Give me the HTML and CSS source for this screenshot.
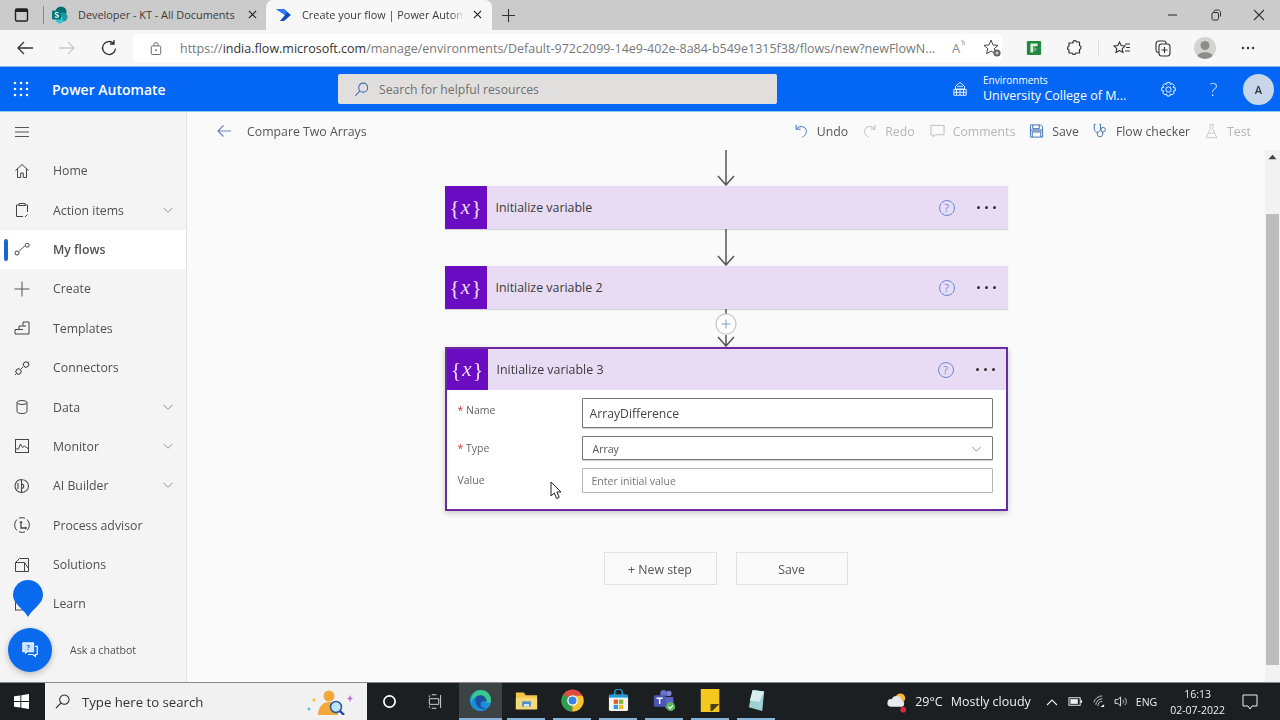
FILE: index.html
```html
<!DOCTYPE html>
<html lang="en">
<head>
<meta charset="utf-8">
<title>Create your flow | Power Automate</title>
<link rel="stylesheet" href="styles.css">
</head>
<body>
<div class="screen">
  <div class="tabstrip">
    <svg class="tb-ico" viewBox="0 0 18 18"><rect x="2.5" y="3" width="12" height="12" rx="1.5" fill="none" stroke="#222" stroke-width="1.4"/><rect x="2.5" y="3" width="12" height="3" fill="#222"/></svg>
    <span class="tab-sep"></span>
    <div class="tab tab-idle">
      <svg class="fav" viewBox="0 0 18 18"><circle cx="10" cy="6" r="5.5" fill="#036c70"/><circle cx="12" cy="11" r="4.5" fill="#1a9ba1"/><circle cx="8.5" cy="14" r="3.5" fill="#37c6d0"/><rect x="1" y="4.5" width="9" height="9" rx="1" fill="#03787c"/><path d="M7.5 7c-1-.8-3.3-.7-3.3.6 0 1.6 3.3 1 3.3 2.6 0 1.300-2.500 1.400-3.500.6" fill="none" stroke="#fff" stroke-width="1.100"/></svg>
      <span class="tab-title">Developer - KT - All Documents</span>
      <svg class="tab-x" viewBox="0 0 10 10"><path d="M1 1l8 8M9 1l-8 8" stroke="#222" stroke-width="1.300"/></svg>
    </div>
    <div class="tab tab-on">
      <svg class="fav" viewBox="0 0 18 18"><path d="M1 3h8l7 6-7 6H5l5-6z" fill="#0f4fb8"/><path d="M1 3h8l3 3.500-7 8.500H5l5-6z" fill="#2f7df0"/></svg>
      <span class="tab-title tab-fade">Create your flow | Power Autom</span>
      <svg class="tab-x" viewBox="0 0 10 10"><path d="M1 1l8 8M9 1l-8 8" stroke="#222" stroke-width="1.300"/></svg>
    </div>
    <svg class="newtab" viewBox="0 0 14 14"><path d="M7 0v14M0 7h14" stroke="#333" stroke-width="1.200"/></svg>
    <div class="winbtns">
      <svg viewBox="0 0 12 12"><path d="M1 6h9" stroke="#333" stroke-width="1.100"/></svg>
      <svg viewBox="0 0 12 12"><rect x="2" y="3.500" width="6.500" height="7.500" rx="1.500" fill="none" stroke="#333"/><path d="M4 3.500V2.500a1.500 1.500 0 0 1 1.500-1.500h2A2.500 2.500 0 0 1 10.500 3.500v4" fill="none" stroke="#333"/></svg>
      <svg viewBox="0 0 12 12"><path d="M1 1l10 10M11 1L1 11" stroke="#333" stroke-width="1.100"/></svg>
    </div>
  </div>

  <div class="addrbar">
    <svg class="nav-ico" viewBox="0 0 18 18"><path d="M17 9H2M8 3L2 9l6 6" fill="none" stroke="#333" stroke-width="1.300"/></svg>
    <svg class="nav-ico faint" viewBox="0 0 18 18"><path d="M1 9h15M10 3l6 6-6 6" fill="none" stroke="#ccc" stroke-width="1.300"/></svg>
    <svg class="nav-ico" viewBox="0 0 18 18"><path d="M15.500 9.500a6.500 6.500 0 1 1-2-5.200M14 1v4h-4" fill="none" stroke="#333" stroke-width="1.300"/></svg>
    <div class="urlbox">
      <svg class="lock" viewBox="0 0 14 16"><rect x="1.500" y="5" width="11" height="10" rx="1.500" fill="none" stroke="#555"/><path d="M4.500 5V3.500a2.500 2.500 0 0 1 5 0V5" fill="none" stroke="#555"/><circle cx="7" cy="10" r="1" fill="#555"/></svg>
      <span class="url"><span class="url-dim">https://</span>india.flow.microsoft.com<span class="url-dim">/manage/environments/Default-972c2099-14e9-402e-8a84-b549e1315f38/flows/new?newFlowN...</span></span>
      <span class="readaloud">A<svg viewBox="0 0 6 10"><path d="M1 1c2 1 3 3 2 6M3 1c2 1 3 3 2 6" fill="none" stroke="#888" stroke-width=".8"/></svg></span>
      <svg class="url-star" viewBox="0 0 20 20"><path d="M9 2l2 5 5 .4-3.800 3.300 1.200 5L9 13l-4.400 2.700 1.200-5L2 7.400 7 7z" fill="none" stroke="#444"/><circle cx="15" cy="15" r="3.600" fill="#666"/><path d="M13.500 15h3M15 13.500v3" stroke="#fff" stroke-width=".9"/></svg>
    </div>
    <div class="ext-row">
      <svg class="ext-ico" viewBox="0 0 18 18"><rect x="1" y="1" width="16" height="16" rx="1.500" fill="#1f8a3d"/><path d="M5 14V4h8v3H8v7z" fill="#fff" opacity=".85"/><path d="M9 8.500l3 2-3 2z" fill="#1f8a3d" stroke="#fff" stroke-width=".5"/></svg>
      <svg class="ext-ico" viewBox="0 0 18 18"><path d="M7 2.500c1-1.500 3-1 3.500.5h3v3.500c2 .5 2 3.500 0 4V14h-3.500c-.5 2-3.500 2-4 0H3v-3c-2-.5-2-3 0-4V4h4z" fill="none" stroke="#333" stroke-width="1.200"/></svg>
      <span class="ext-sep"></span>
      <svg class="ext-ico" viewBox="0 0 18 18"><path d="M6.500 3l1.700 3.600 3.800.4-2.800 2.600.8 3.900-3.500-2-3.500 2 .8-3.900L1 7l3.800-.4zM12 5h5M13 8.500h4M12 12h5" fill="none" stroke="#333" stroke-width="1.100"/></svg>
      <svg class="ext-ico" viewBox="0 0 18 18"><rect x="5" y="5" width="11" height="12" rx="2.500" fill="none" stroke="#333" stroke-width="1.100"/><path d="M5 13.500H4a2.500 2.500 0 0 1-2-2.500V5a3 3 0 0 1 3-3h5a2 2 0 0 1 2 2v1M10.500 8v6M7.500 11h6" fill="none" stroke="#333" stroke-width="1.100"/></svg>
      <svg class="profile" viewBox="0 0 22 22"><circle cx="11" cy="11" r="11" fill="#d3d3d0"/><circle cx="11" cy="8.500" r="4.500" fill="#8c8c88"/><path d="M3.500 19c1-5 14-5 15 0a11 11 0 0 1-15 0z" fill="#8c8c88"/></svg>
      <svg class="ext-ico" viewBox="0 0 18 18"><circle cx="4" cy="9" r="1.200" fill="#333"/><circle cx="9" cy="9" r="1.200" fill="#333"/><circle cx="14" cy="9" r="1.200" fill="#333"/></svg>
    </div>
  </div>

  <header class="appbar">
    <svg class="waffle" viewBox="0 0 16 16" fill="#fff"><circle cx="2" cy="2" r="1.300"/><circle cx="8" cy="2" r="1.300"/><circle cx="14" cy="2" r="1.300"/><circle cx="2" cy="8" r="1.300"/><circle cx="8" cy="8" r="1.300"/><circle cx="14" cy="8" r="1.300"/><circle cx="2" cy="14" r="1.300"/><circle cx="8" cy="14" r="1.300"/><circle cx="14" cy="14" r="1.300"/></svg>
    <span class="brand">Power Automate</span>
    <div class="searchbox">
      <svg viewBox="0 0 16 16"><circle cx="9.800" cy="6" r="4.800" fill="none" stroke="#3d6fb8" stroke-width="1.200"/><path d="M6.300 9.500L1.500 14.500" stroke="#3d6fb8" stroke-width="1.200"/></svg>
      <span>Search for helpful resources</span>
    </div>
    <div class="env">
      <svg viewBox="0 0 18 18"><path d="M9 1.500L14 6v3H4V6zM2 16V9.500h14V16zM5 9.500V16M9 9.500V16M13 9.500V16M2 12.700h14M6 6h6" fill="none" stroke="#fff"/></svg>
      <div class="env-text"><span class="env-small">Environments</span><span class="env-name">University College of M...</span></div>
    </div>
    <svg class="gear" viewBox="0 0 18 18"><circle cx="9" cy="9" r="2.800" fill="none" stroke="#fff"/><path d="M7.500 1.500h3l.5 2.300 2-1.200 2.100 2.100-1.200 2 2.300.5v3l-2.300.5 1.200 2-2.100 2.100-2-1.200-.5 2.300h-3l-.5-2.300-2 1.200-2.100-2.100 1.200-2-2.300-.5v-3l2.300-.5-1.200-2L5 2.600l2 1.200z" fill="none" stroke="#fff" stroke-linejoin="round"/></svg>
    <span class="help">?</span>
    <span class="avatar">A</span>
  </header>

  <div class="workspace">
    <nav class="sidebar">
      <div class="burger"><svg viewBox="0 0 16 12"><path d="M1 1.500h14M1 6h14M1 10.500h14" stroke="#555" stroke-width="1.100"/></svg></div>
      <a class="nav-item"><svg viewBox="0 0 16 16"><path d="M1.500 7.500L8 1.500l6.500 6M3.500 6v8.500h3.200V10h2.600v4.500h3.200V6" fill="none" stroke="#444"/></svg><span>Home</span></a>
      <a class="nav-item"><svg viewBox="0 0 16 16"><path d="M5 3H2.500v11.500H9M11 3h2.500v7M5 3.500V1.500h6v2z" fill="none" stroke="#444"/><path d="M11 15l2.500-2.500" stroke="#444"/></svg><span>Action items</span><svg class="chev" viewBox="0 0 12 8"><path d="M1 1l5 5 5-5" fill="none" stroke="#888"/></svg></a>
      <a class="nav-item active"><svg viewBox="0 0 16 16"><circle cx="3" cy="12" r="2" fill="none" stroke="#444"/><rect x="11.500" y="2.500" width="3.500" height="3.500" rx="1" fill="none" stroke="#444"/><path d="M5 10.500l3.500-3.500M8.500 7l2.500-2.500" stroke="#444"/></svg><span>My flows</span></a>
      <a class="nav-item"><svg viewBox="0 0 16 16"><path d="M8 .5v15M.5 8h15" stroke="#555"/></svg><span>Create</span></a>
      <a class="nav-item"><svg viewBox="0 0 16 16"><path d="M1 14V9.500h4V6h4V2h6v12zM5 9.500h4M9 6h3" fill="none" stroke="#444"/></svg><span>Templates</span></a>
      <a class="nav-item"><svg viewBox="0 0 16 16"><rect x="2" y="9" width="5" height="5" rx="2" fill="none" stroke="#444" transform="rotate(-45 4.500 11.500)"/><rect x="9.500" y="2" width="5" height="5" rx="2" fill="none" stroke="#444" transform="rotate(-45 12 4.500)"/><path d="M7 9l2-2M1 15l1.500-1.500M13.500 3L15 1.500" stroke="#444"/></svg><span>Connectors</span></a>
      <a class="nav-item"><svg viewBox="0 0 16 16"><ellipse cx="8" cy="3.500" rx="5" ry="2" fill="none" stroke="#444"/><path d="M3 3.500v9c0 2.700 10 2.700 10 0v-9" fill="none" stroke="#444"/></svg><span>Data</span><svg class="chev" viewBox="0 0 12 8"><path d="M1 1l5 5 5-5" fill="none" stroke="#888"/></svg></a>
      <a class="nav-item"><svg viewBox="0 0 16 16"><rect x="1.500" y="1.500" width="13" height="13" fill="none" stroke="#444"/><path d="M1.500 11h3l2-5 2 3.500 2-1.500 4 3" fill="none" stroke="#444"/></svg><span>Monitor</span><svg class="chev" viewBox="0 0 12 8"><path d="M1 1l5 5 5-5" fill="none" stroke="#888"/></svg></a>
      <a class="nav-item"><svg viewBox="0 0 16 16"><path d="M7.500 1.500a6.500 6.500 0 1 0 0 13zM7.500 1.500c3 0 7 2 7 6.500s-4 6.500-7 6.500M7.500 6c3 0 3 4.500 0 4.500M4 5v6" fill="none" stroke="#444" stroke-width="1.100"/></svg><span>AI Builder</span><svg class="chev" viewBox="0 0 12 8"><path d="M1 1l5 5 5-5" fill="none" stroke="#888"/></svg></a>
      <a class="nav-item"><svg viewBox="0 0 16 16"><path d="M3 2.500a7.500 7.500 0 0 0 0 11M13 2.500a7.500 7.500 0 0 1 0 11M5 1.200a7.500 7.500 0 0 1 6 0M5 14.800a7.500 7.500 0 0 0 6 0" fill="none" stroke="#444"/><circle cx="7" cy="5.500" r="1.300" fill="#444"/><path d="M7 7v4h3" fill="none" stroke="#444" stroke-width="1.300"/><circle cx="11.500" cy="11" r="1.300" fill="#444"/></svg><span>Process advisor</span></a>
      <a class="nav-item"><svg viewBox="0 0 16 16"><path d="M1.500 14.500V5.500L5.500 1.500h9v13zM1.500 5.500h9l4 6M10.500 5.500v9" fill="none" stroke="#444"/></svg><span>Solutions</span></a>
      <a class="nav-item"><svg viewBox="0 0 16 16"><rect x="1.500" y="3" width="13" height="11" fill="none" stroke="#444"/></svg><span>Learn</span></a>
      <svg class="pin" viewBox="0 0 30 37"><path d="M15 0a15 15 0 0 1 15 15c0 9-10 13-15 22C10 28 0 24 0 15A15 15 0 0 1 15 0z" fill="#0a6aee"/></svg>
      <div class="chatbot">
        <span class="chat-btn"><svg viewBox="0 0 20 20"><path d="M2 2h12v10H7l-2 2v-2H2z" fill="#cfe3ff" stroke="#fff"/><path d="M15.500 6H18v9h-2v2l-3-2H8" fill="none" stroke="#fff" stroke-width="1.300"/><text x="8" y="10.500" class="chat-q">?</text></svg></span>
        <span class="chat-label">Ask a chatbot</span>
      </div>
    </nav>

    <main class="main">
      <div class="cmdbar">
        <svg class="back" viewBox="0 0 16 14"><path d="M15 7H2M7.500 1.500L2 7l5.500 5.500" fill="none" stroke="#6f86c9" stroke-width="1.200"/></svg>
        <span class="flow-name">Compare Two Arrays</span>
        <div class="cmds">
          <span class="cmd c-undo"><svg viewBox="0 0 16 18"><path d="M2 2v5h5M2 7c3-4 9-4 11 0 1.500 3.500-.5 7-4 9" fill="none" stroke="#3d6fb8" stroke-width="1.100"/></svg>Undo</span>
          <span class="cmd off c-redo"><svg viewBox="0 0 16 18"><path d="M14 2v5H9M14 7c-3-4-9-4-11 0-1.500 3.500.5 7 4 9" fill="none" stroke="#bbb" stroke-width="1.100"/></svg>Redo</span>
          <span class="cmd off c-com"><svg viewBox="0 0 16 16"><path d="M1 2h14v10H6l-2.500 2.500V12H1z" fill="none" stroke="#bbb"/></svg>Comments</span>
          <span class="cmd c-save"><svg viewBox="0 0 16 16"><path d="M1.500 1.500h11l2 2v11h-13z" fill="none" stroke="#3d6fb8"/><path d="M4 1.500v4h7v-4M3.500 14.500V9h9v5.500" fill="none" stroke="#3d6fb8"/><rect x="2" y="6" width="12" height="2.500" fill="#3d6fb8" opacity=".6"/></svg>Save</span>
          <span class="cmd c-check"><svg viewBox="0 0 16 18"><path d="M2.500 1.500H1v5c0 2.500 1.800 4 3.500 4S8 9 8 6.500v-5H6.500M4.500 10.500v2c0 4 6 4 6 0V10" fill="none" stroke="#3d6fb8" stroke-width="1.100"/><circle cx="11" cy="7.500" r="2.500" fill="none" stroke="#3d6fb8" stroke-width="1.100"/></svg>Flow checker</span>
          <span class="cmd off c-test"><svg viewBox="0 0 14 18"><path d="M5 1.500h4M5.500 1.500V7L1 16.500h12L8.500 7V1.500M3.500 11.500h7" fill="none" stroke="#c4c4c4"/></svg>Test</span>
        </div>
      </div>

      <div class="canvas">
        <div class="conn conn-a"><svg viewBox="0 0 18 36"><path d="M9 0v35M1 26l8 9 8-9" fill="none" stroke="#555" stroke-width="1.500"/></svg></div>
        <section class="card">
          <div class="card-head">
            <span class="var-ico">{<i>x</i>}</span>
            <span class="card-title">Initialize variable</span>
            <span class="q">?</span>
            <span class="dots"><b></b><b></b><b></b></span>
          </div>
        </section>
        <div class="conn conn-b"><svg viewBox="0 0 18 37"><path d="M9 0v36M1 27l8 9 8-9" fill="none" stroke="#555" stroke-width="1.500"/></svg></div>
        <section class="card">
          <div class="card-head">
            <span class="var-ico">{<i>x</i>}</span>
            <span class="card-title">Initialize variable 2</span>
            <span class="q">?</span>
            <span class="dots"><b></b><b></b><b></b></span>
          </div>
        </section>
        <div class="conn conn-c">
          <svg viewBox="0 0 22 38"><path d="M11 0v5M11 26v11M3 28l8 9 8-9" fill="none" stroke="#555" stroke-width="1.500"/><circle cx="11" cy="15" r="10" fill="#fff" stroke="#c8c8c8" stroke-width="1.200"/><path d="M11 10.500v9M6.500 15h9" stroke="#7fa0b8"/></svg>
        </div>
        <section class="card card-open">
          <div class="card-head">
            <span class="var-ico">{<i>x</i>}</span>
            <span class="card-title">Initialize variable 3</span>
            <span class="q">?</span>
            <span class="dots"><b></b><b></b><b></b></span>
          </div>
          <div class="form">
            <label class="lbl lbl-name"><em>*</em> Name</label>
            <div class="field f-name">ArrayDifference</div>
            <label class="lbl lbl-type"><em>*</em> Type</label>
            <div class="field f-type"><span>Array</span><svg viewBox="0 0 12 8"><path d="M1 1l5 5 5-5" fill="none" stroke="#888"/></svg></div>
            <label class="lbl lbl-value">Value</label>
            <div class="field f-value">Enter initial value</div>
          </div>
        </section>
        <div class="actions">
          <span class="btn btn-new">+ New step</span>
          <span class="btn btn-save">Save</span>
        </div>
      </div>
    </main>

    <div class="scrollbar">
      <svg viewBox="0 0 10 6"><path d="M5 .5L9.500 5.500H.5z" fill="#444"/></svg>
      <span class="thumb"></span>
    </div>

    <svg class="cursor" viewBox="0 0 13 19"><path d="M1 1v14l3.300-3 2.300 5.500 2.600-1.100L6.900 11H11z" fill="#fff" stroke="#222" stroke-width="1"/></svg>
  </div>

  <footer class="taskbar">
    <svg class="start" viewBox="0 0 16 16" fill="#fff"><path d="M0 2.500l6.800-1v6H0zM7.800 1.300L16 0v7.500H7.800zM0 8.500h6.800v6l-6.800-1zM7.800 8.500H16V16l-8.200-1.300z"/></svg>
    <div class="ts-box">
      <svg viewBox="0 0 16 16"><circle cx="10" cy="6" r="5" fill="none" stroke="#222" stroke-width="1.100"/><path d="M6.300 9.700L1 15" stroke="#222" stroke-width="1.200"/></svg>
      <span>Type here to search</span>
      <svg class="ts-art" viewBox="0 0 48 26"><circle cx="4" cy="20" r="1.500" fill="#4fc3e8"/><circle cx="9" cy="11" r="1.700" fill="#f4c542"/><path d="M45 6l1 2.500 2 1-2 1-1 2.500-1-2.500-2-1 2-1z" fill="#c86ad8"/><circle cx="24" cy="7" r="5.500" fill="#f2a83a"/><path d="M13 26c0-7 4-13 11-13s9 6 9 13z" fill="#f2a83a"/><circle cx="31" cy="18" r="5.500" fill="#bfe3f2" stroke="#2a5aa8" stroke-width="1.600"/><path d="M35 22l4 4" stroke="#2a3f9a" stroke-width="2.400"/></svg>
    </div>
    <span class="tb-plain"><svg viewBox="0 0 16 16"><circle cx="8" cy="8" r="6" fill="none" stroke="#fff" stroke-width="1.800"/></svg></span>
    <span class="tb-plain"><svg viewBox="0 0 16 16"><path d="M2.500 3.500V1.500M5 .8h5M2.500 14.500v-2M5 15.200h5M2.500 5h10v6h-10z M14.500 1v14" fill="none" stroke="#ddd"/></svg></span>
    <span class="app app-hl"><svg viewBox="0 0 26 26"><circle cx="13" cy="13" r="12" fill="#1a8fd8"/><path d="M25 14c-1-7-7-9-12-8C8 7 6 12 8 17c2 5 8 7 12 5-3 0-7-1-7-5 0-3 4-4 7-3 2 .5 4 1 5 0z" fill="#1c4fa0"/><path d="M13 1c6 0 12 4 12 12 0 3-3 3-5 2 0-5-3-8-7-8-5 0-9 4-11 8C2 7 7 1 13 1z" fill="#39c98d"/></svg></span>
    <span class="app"><svg viewBox="0 0 26 22"><path d="M1 2h9l2 3h13v16H1z" fill="#f3c648"/><path d="M1 8h24v13H1z" fill="#f8d775"/><rect x="8" y="12" width="10" height="6" fill="#4a90c8"/><rect x="10" y="15" width="6" height="3" fill="#d8e6f0"/></svg></span>
    <span class="app"><svg viewBox="0 0 24 24"><circle cx="12" cy="12" r="11.500" fill="#dd4b3e"/><path d="M12 12L2.500 5.500A11.500 11.500 0 0 0 12 23.500z" fill="#2fa04f"/><path d="M12 12v11.500A11.500 11.500 0 0 0 22.500 7H12z" fill="#f4c430"/><circle cx="12" cy="12" r="5.500" fill="#fff"/><circle cx="12" cy="12" r="4.200" fill="#3b82e8"/></svg></span>
    <span class="app"><svg viewBox="0 0 24 24"><path d="M8 7V4a4 4 0 0 1 8 0v3" fill="none" stroke="#1a9bd8" stroke-width="1.500"/><rect x="2" y="6" width="20" height="17" rx="2" fill="#f4f4f4"/><path d="M2 6h20v3H2z" fill="#1a9bd8"/><rect x="7" y="11" width="4.500" height="4.500" fill="#e8562a"/><rect x="12.500" y="11" width="4.500" height="4.500" fill="#7fba2a"/><rect x="7" y="16.500" width="4.500" height="4.500" fill="#2a9ad8"/><rect x="12.500" y="16.500" width="4.500" height="4.500" fill="#f4bc1a"/></svg></span>
    <span class="app"><svg viewBox="0 0 26 26"><circle cx="18" cy="5" r="3" fill="#7b83d8"/><circle cx="12" cy="5" r="3.800" fill="#6870c8"/><path d="M9 9h14v9a5 5 0 0 1-10 0z" fill="#5b64c0"/><rect x="1" y="7" width="13" height="13" rx="1.500" fill="#4a55b5"/><path d="M4 10.500h7M7.500 10.500V17" stroke="#fff" stroke-width="1.600"/><circle cx="20" cy="20" r="5" fill="#5cb85c"/><path d="M17.500 20l2 2 3-3.500" fill="none" stroke="#fff" stroke-width="1.300"/></svg></span>
    <span class="app"><svg viewBox="0 0 22 26"><rect width="21" height="26" fill="#f4c81f"/><path d="M11 25v-8h10l-8 8z" fill="#4a3d18"/></svg></span>
    <span class="app"><svg viewBox="0 0 20 24"><path d="M6 1l12 1.500L16 23 2 19z" fill="#9fd0d4"/><path d="M6 1l12 1.500-5 11L3 12z" fill="#d4eef0"/></svg></span>
    <div class="tray">
      <svg class="t-cloud" viewBox="0 0 24 22"><circle cx="15" cy="7" r="5" fill="#f4b93c"/><path d="M5 16a4 4 0 0 1 1-8 5.500 5.500 0 0 1 10.500 1.500A3.500 3.500 0 0 1 17 16z" fill="#e6eaee"/><circle cx="18" cy="19" r="3" fill="#d8273a"/></svg>
      <span class="t-temp">29°C</span>
      <span class="t-sky">Mostly cloudy</span>
      <svg class="t-up" viewBox="0 0 12 8"><path d="M1 7l5-5 5 5" fill="none" stroke="#eee" stroke-width="1.100"/></svg>
      <svg class="t-ic t-bat" viewBox="0 0 16 12"><rect x="1" y="2" width="12" height="8" fill="none" stroke="#eee"/><rect x="2.500" y="3.500" width="8" height="5" fill="#eee"/><rect x="13.500" y="4.500" width="1.500" height="3" fill="#eee"/></svg>
      <svg class="t-ic t-wifi" viewBox="0 0 14 14"><path d="M1 8a9 9 0 0 1 9-7M3 10.500a7 7 0 0 1 7-6.500M5.500 12a4 4 0 0 1 4.500-5" fill="none" stroke="#ccc"/><path d="M8 13h4v-3z" fill="#eee"/></svg>
      <svg class="t-ic t-snd" viewBox="0 0 16 14"><path d="M1 5h3l3-3v10L4 9H1z" fill="none" stroke="#eee"/><path d="M9.500 5a3 3 0 0 1 0 4M11.500 3a6 6 0 0 1 0 8" fill="none" stroke="#ccc"/></svg>
      <span class="t-lang">ENG</span>
      <span class="t-clock"><span>16:13</span><span>02-07-2022</span></span>
      <svg class="t-note" viewBox="0 0 16 16"><path d="M1 1h14v11h-5l-2 3-2-3H1z" fill="none" stroke="#eee"/></svg>
    </div>
  </footer>
</div>
</body>
</html>
```

FILE: styles.css
```css
* { box-sizing: border-box; }
html, body { margin: 0; padding: 0; height: 100%; overflow: hidden; }
body { font-family: "Open Sans", "Noto Sans", sans-serif; color: #444; }
svg { display: block; flex: none; }
.screen { width: 1280px; height: 720px; display: flex; flex-direction: column; overflow: hidden; filter: blur(.35px); }

/* tab strip */
.tabstrip { height: 30px; background: #cbcbcb; display: flex; align-items: center; padding-left: 13px; }
.tb-ico { width: 18px; height: 18px; }
.tab-sep { width: 1px; height: 18px; background: #888; margin: 0 7px 0 12px; }
.tab { height: 30px; display: flex; align-items: center; font-size: 10.9px; padding-bottom: 1px; }
.tab-idle { width: 215px; padding-left: 0; }
.tab-idle .tab-title { width: 157px; margin-left: 9px; margin-right: 13px; }
.tab-on { width: 226px; background: #f7f7f7; border-radius: 7px 7px 0 0; padding-left: 9px; }
.tab-on .tab-title { width: 162px; margin-left: 9px; margin-right: 9px; }
.fav { width: 18px; height: 18px; }
.tab-title { white-space: nowrap; color: #3a3a3a; }
.tab-fade { -webkit-mask-image: linear-gradient(90deg, #000 92%, transparent 100%); mask-image: linear-gradient(90deg, #000 92%, transparent 100%); }
.tab-x { width: 9px; height: 9px; }
.newtab { width: 13px; height: 13px; margin-left: 10px; }
.winbtns { margin-left: auto; display: flex; gap: 31px; padding-right: 15px; }
.winbtns svg { width: 12px; height: 12px; }

/* address bar */
.addrbar { height: 36px; background: #f7f7f7; display: flex; align-items: center; padding-left: 16px; }
.nav-ico { width: 18px; height: 18px; margin-right: 24px; }
.urlbox { width: 880px; height: 28px; margin-left: -9px; background: #fff; border-radius: 4px; display: flex; align-items: center; padding-left: 17px; }
.lock { width: 12px; height: 15px; }
.url { margin-left: 18px; width: 763px; font-size: 12.5px; white-space: nowrap; color: #333; }
.url-dim { color: #777; }
.readaloud { display: flex; font-size: 13px; color: #888; width: 20px; margin-left: 9px; }
.readaloud svg { width: 5px; height: 9px; }
.url-star { width: 20px; height: 20px; margin-left: 10px; }
.ext-row { display: flex; align-items: center; margin-left: 24px; }
.ext-ico { width: 18px; height: 18px; margin-right: 23px; }
.ext-row .ext-ico:first-child { width: 16px; height: 16px; margin-right: 24px; }
.ext-sep { width: 1px; height: 18px; background: #ddd; margin: 0 14px 0 -9px; }
.profile { width: 22px; height: 22px; margin: 0 23px 0 -1px; }

/* app header */
.appbar { height: 46px; background: #0366f5; display: flex; align-items: center; padding-left: 13px; color: #fff; border-top: 1px solid #7fb0f0; border-bottom: 1px solid #7fd0f0; }
.waffle { width: 16px; height: 16px; }
.brand { font-size: 14px; font-weight: 600; margin-left: 23px; width: 286px; white-space: nowrap; }
.searchbox { width: 439px; height: 30px; background: #e1dfdd; border-radius: 2px; display: flex; align-items: center; padding-left: 16px; color: #6f6f6f; font-size: 12.2px; }
.searchbox svg { width: 15px; height: 15px; margin-right: 10px; }
.env { display: flex; align-items: center; margin-left: 175px; width: 208px; }
.env > svg { width: 16px; height: 16px; margin-right: 15px; }
.env-text { display: flex; flex-direction: column; line-height: 15px; margin-top: -1px; }
.env-small { font-size: 10px; line-height: 13px; }
.env-name { font-size: 12.5px; line-height: 17px; white-space: nowrap; }
.gear { width: 17px; height: 17px; margin-left: 0; }
.help { font-size: 19px; margin-left: 31px; width: 11px; color: #cfe0ff; font-weight: 300; text-align: center; }
.avatar { width: 31px; height: 31px; border-radius: 50%; background: #c7d6ea; color: #333; font-size: 11px; font-weight: 600; display: flex; align-items: center; justify-content: center; margin-left: 24px; }

/* workspace */
.workspace { position: relative; flex: 1; min-height: 0; display: flex; background: #fafafa; }
.sidebar { position: relative; width: 187px; flex: none; background: #f4f4f4; border-right: 1px solid #e2e2e2; }
.burger { height: 39px; display: flex; align-items: center; padding-left: 14px; }
.burger svg { width: 16px; height: 12px; }
.nav-item { height: 39.4px; display: flex; align-items: center; padding-left: 14px; font-size: 12.3px; color: #505050; position: relative; }
.nav-item > svg:first-child { width: 16px; height: 16px; margin-right: 23px; }
.nav-item .chev { width: 12px; height: 7px; margin-left: auto; margin-right: 12px; }
.nav-item.active { background: #fff; font-weight: 600; }
.nav-item.active::before { content: ""; position: absolute; left: 4px; top: 9px; width: 4px; height: 22px; border-radius: 2px; background: #1866d2; }
.pin { position: absolute; left: 13px; top: 468px; width: 30px; height: 37px; }
.chatbot { position: absolute; left: 8px; top: 516px; display: flex; align-items: center; }
.chat-btn { width: 44px; height: 44px; border-radius: 50%; background: #0a6aee; display: flex; align-items: center; justify-content: center; box-shadow: 0 2px 6px rgba(0,0,0,.25); }
.chat-btn svg { width: 18px; height: 18px; }
.chat-q { font-size: 8px; font-weight: 700; fill: #0a6aee; text-anchor: middle; }
.chat-label { font-size: 10.5px; margin-left: 18px; color: #505050; }

/* main */
.main { width: 1078px; flex: none; display: flex; flex-direction: column; }
.cmdbar { height: 38px; display: flex; align-items: center; padding-left: 29px; font-size: 12.3px; }
.back { width: 16px; height: 14px; margin-right: 15px; }
.flow-name { color: #555; }
.cmds { margin-left: auto; display: flex; align-items: center; padding-right: 14px; }
.cmd { display: flex; align-items: center; color: #555; white-space: nowrap; }
.cmd svg { width: 15px; height: 16px; margin-right: 8px; }
.cmd.off { color: #b5b5b5; }
.c-redo { margin-left: 14px; }
.c-com { margin-left: 15px; }
.c-save { margin-left: 14px; }
.c-check { margin-left: 14px; }
.c-test { margin-left: 14px; }
.canvas { flex: 1; display: flex; flex-direction: column; align-items: center; min-height: 0; }
.conn { display: flex; justify-content: center; width: 22px; }
.conn-a { height: 36px; }
.conn-b { height: 37px; }
.conn-c { height: 38px; }
.conn-a svg { width: 18px; height: 36px; }
.conn-b svg { width: 18px; height: 37px; }
.conn-c svg { width: 22px; height: 38px; }
.card { width: 563px; background: #e8dcf5; box-shadow: 0 1px 1px rgba(0,0,0,.15); }
.card-head { height: 43px; display: flex; align-items: center; padding-right: 12px; background: #e8dcf5; }
.var-ico { width: 42px; height: 100%; background: #6a0dc2; color: #f0d9f8; font-family: "Liberation Serif", serif; font-size: 22px; display: flex; align-items: center; justify-content: center; }
.var-ico i { margin: 0 1px; font-size: 21px; }
.card-title { margin-left: 9px; font-size: 12.4px; color: #3a3a3a; }
.q { margin-left: auto; width: 16px; height: 16px; border: 1px solid #6f86d6; border-radius: 50%; color: #6f86d6; font-size: 11px; line-height: 14px; text-align: center; }
.dots { display: flex; gap: 5px; margin-left: 22px; }
.dots b { width: 3px; height: 3px; border-radius: 50%; background: #333; }
.card-open { height: 164px; background: #fff; border: 2px solid #6b2a9e; box-shadow: 0 2px 6px rgba(0,0,0,.2); }
.card-open .card-head { height: 41px; padding-right: 11px; }
.card-open .var-ico { width: 41px; }
.form { display: grid; grid-template-columns: 124px 411px; grid-template-rows: 30px 24px 25px; row-gap: 8px; padding: 8px 0 0 11px; }
.lbl { font-size: 10.5px; color: #666; padding-top: 5px; }
.lbl em { color: #d13438; font-style: normal; }
.lbl-value { padding-top: 5px; }
.field { background: #fff; border: 1px solid #777; border-radius: 1px; display: flex; align-items: center; }
.f-name { font-size: 12.2px; padding: 1px 0 0 7px; color: #444; box-shadow: 0 1px 1px rgba(0,0,0,.2); }
.f-type { font-size: 10.5px; padding: 2px 10px 0 10px; justify-content: space-between; color: #555; box-shadow: 0 1px 1px rgba(0,0,0,.2); }
.f-type svg { width: 11px; height: 7px; }
.f-value { font-size: 10.5px; padding-left: 9px; color: #777; border-color: #b5b5b5; }
.actions { display: flex; gap: 19px; margin-top: 41px; width: 244px; margin-left: -1px; }
.btn { height: 33px; padding-top: 1px; border: 1px solid #e1e1e1; background: #fafafa; display: flex; align-items: center; justify-content: center; font-size: 12.3px; color: #555; }
.btn-new { width: 113px; }
.btn-save { width: 112px; }
.scrollbar { width: 15px; flex: none; margin-top: 38px; background: #f2f2f2; display: flex; flex-direction: column; align-items: center; padding-left: 0; }
.scrollbar svg { width: 9px; height: 6px; margin-top: 4px; }
.thumb { width: 13px; height: 451px; margin-top: 54px; background: #bdbdbd; }
.cursor { position: absolute; left: 550px; top: 369px; width: 13px; height: 19px; }

/* taskbar */
.taskbar { height: 38px; background: #1b1f21; display: flex; align-items: center; padding-left: 14px; color: #eee; border-top: 1px solid #8a8a8a; }
.start { width: 15px; height: 15px; }
.ts-box { width: 322px; height: 37px; margin-left: 16px; background: #f1f1f1; display: flex; align-items: center; padding-left: 10px; color: #333; font-size: 13.2px; }
.ts-box > svg:first-child { width: 15px; height: 15px; margin-right: 12px; }
.ts-art { width: 48px; height: 26px; margin-left: auto; margin-right: 14px; }
.tb-plain { width: 45px; display: flex; justify-content: center; }
.tb-plain svg { width: 15px; height: 15px; }
.app { width: 38px; height: 37px; margin-right: 8px; display: flex; align-items: center; justify-content: center; border-bottom: 2px solid #84b4d8; }
.app svg { width: 23px; height: 23px; }
.app-hl { width: 43px; margin-left: 2px; margin-right: 5px; background: #3d4245; }
.tray { margin-left: auto; display: flex; align-items: center; padding-right: 22px; font-size: 12.5px; }
.t-cloud { width: 23px; height: 22px; }
.t-temp { margin-left: 6px; }
.t-sky { margin-left: 8px; }
.t-up { width: 12px; height: 8px; margin-left: 15px; }
.t-ic { width: 15px; height: 13px; }
.t-bat { margin-left: 10px; }
.t-wifi { margin-left: 9px; }
.t-snd { margin-left: 7px; }
.t-lang { font-size: 10.5px; margin-left: 7px; }
.t-clock { display: flex; flex-direction: column; align-items: center; font-size: 10.5px; line-height: 16px; margin-left: 13px; }
.t-note { width: 16px; height: 16px; margin-left: 17px; }
```
